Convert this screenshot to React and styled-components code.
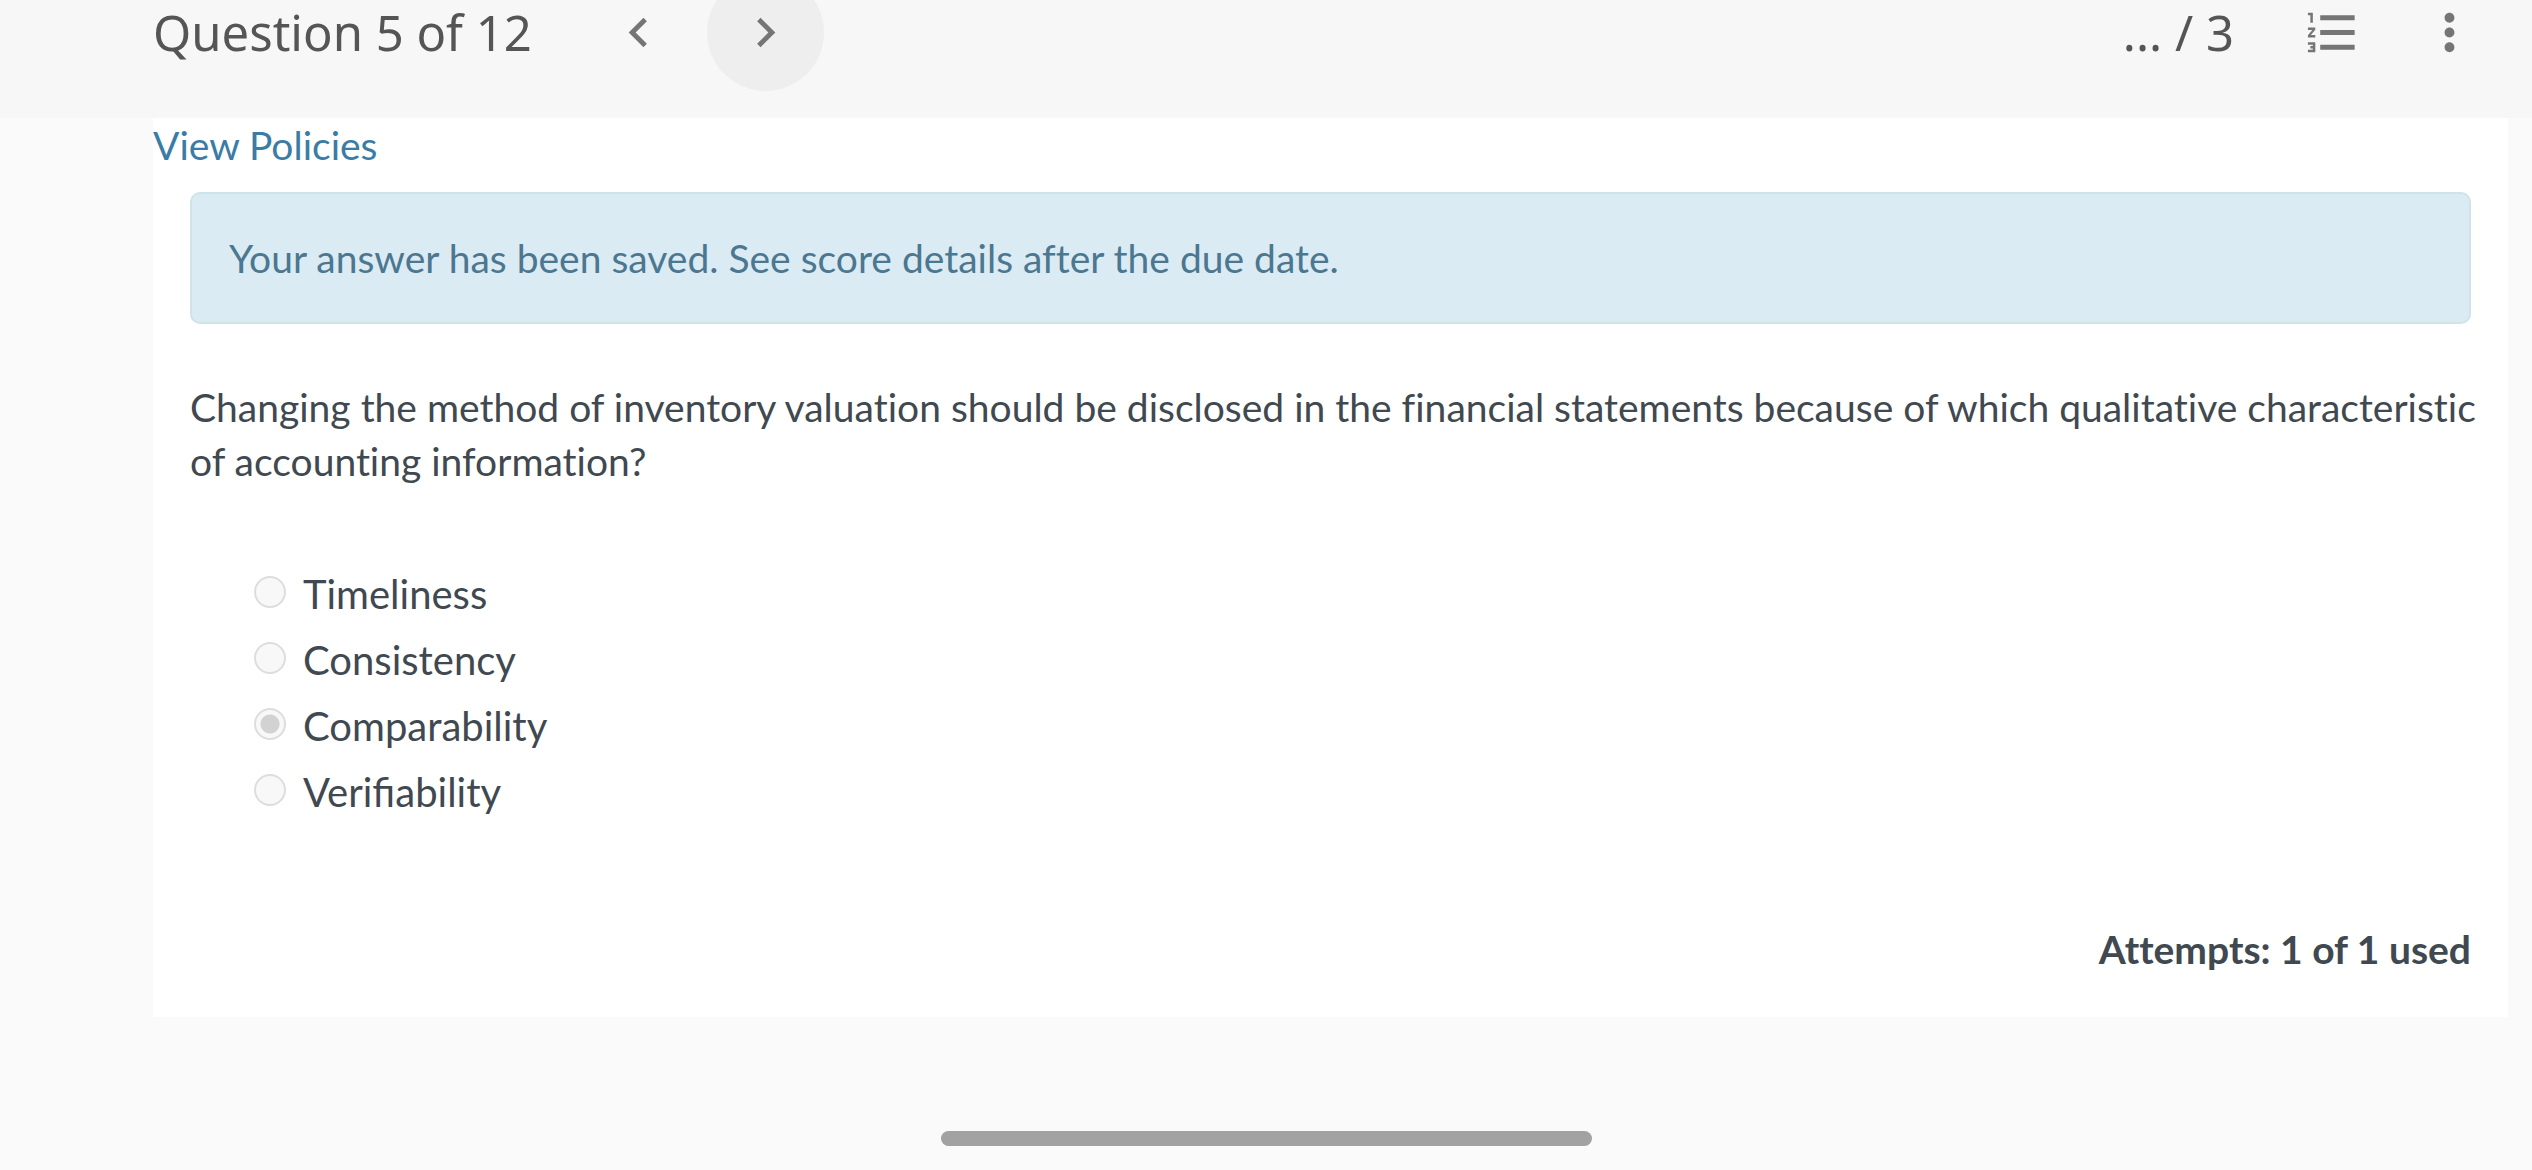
import React from "react";
import styled, { createGlobalStyle } from "styled-components";
import {
  MdChevronLeft,
  MdChevronRight,
  MdFormatListNumbered,
  MdMoreVert,
} from "react-icons/md";

const GlobalStyle = createGlobalStyle`
  *, *::before, *::after { box-sizing: border-box; }
  body {
    margin: 0;
    background: #fafafa;
    color: #404850;
    font-family: Lato, "Noto Sans", sans-serif;
    font-size: 39px;
    font-variant-ligatures: none;
    line-height: 54px;
  }
`;

const Page = styled.div`
  display: flex;
  flex-direction: column;
  min-height: 100vh;
  overflow: hidden;
`;

/* The bar is scrolled partly past the top edge of the screen. */
const TopBar = styled.header`
  display: flex;
  align-items: center;
  justify-content: space-between;
  height: 172px;
  margin-top: -54px;
  padding: 0 24px 0 153px;
  background: #f7f7f7;
  color: #555555;
  font-family: "Noto Sans", "Open Sans", sans-serif;
  font-size: 49px;
  line-height: 66px;
`;

const BarGroup = styled.div`
  display: flex;
  align-items: center;
`;

const Title = styled.h1`
  margin: 0 48px 0 0;
  font: inherit;
`;

const Pager = styled.nav`
  display: flex;
  gap: 10px;
`;

const Points = styled.span`
  margin-right: 40px;
`;

const IconButton = styled.button`
  display: flex;
  align-items: center;
  justify-content: center;
  width: 117px;
  height: 117px;
  padding: 0;
  border: 0;
  border-radius: 50%;
  background: ${(p) => (p.$active ? "#eeeeee" : "transparent")};
  color: #757575;
  font-size: 59px;
`;

const Card = styled.main`
  margin: 0 24px 0 153px;
  padding-bottom: 41px;
  background: #ffffff;
`;

const PolicyLink = styled.a`
  display: inline-block;
  color: #3a7ca5;
  text-decoration: none;
`;

const Body = styled.section`
  padding: 20px 37px 0;
`;

const Notice = styled.div`
  padding: 37px;
  border: 2px solid #cfe3ea;
  border-radius: 10px;
  background: #dbebf4;
  color: #4b7791;
`;

const Prompt = styled.p`
  margin: 56px -24px 0 0;
`;

const Options = styled.fieldset`
  display: flex;
  flex-direction: column;
  gap: 12px;
  margin: 79px 0 0;
  padding: 0 0 0 64px;
  border: 0;
  font-size: 40px;
  font-variant-ligatures: normal;
`;

const Option = styled.label`
  display: flex;
  gap: 17px;
`;

const Radio = styled.input`
  appearance: none;
  flex: none;
  width: 32px;
  height: 32px;
  margin: 9px 0 0;
  border: 2px solid #dddddd;
  border-radius: 50%;
  background: #f8f8f8;

  &:checked {
    background: radial-gradient(circle, #d2d2d2 0 9px, #f8f8f8 10px);
  }
`;

const Attempts = styled.p`
  margin: 103px 0 0;
  font-weight: 700;
  text-align: right;
`;

const HomeIndicator = styled.div`
  width: 651px;
  height: 15px;
  margin: auto auto 24px;
  border-radius: 8px;
  background: #a2a2a2;
`;

const choices = ["Timeliness", "Consistency", "Comparability", "Verifiability"];

export default function App() {
  return (
    <Page>
      <GlobalStyle />
      <TopBar>
        <BarGroup>
          <Title>Question 5 of 12</Title>
          <Pager>
            <IconButton type="button" aria-label="Previous question">
              <MdChevronLeft />
            </IconButton>
            <IconButton type="button" aria-label="Next question" $active>
              <MdChevronRight />
            </IconButton>
          </Pager>
        </BarGroup>
        <BarGroup>
          <Points>... / 3</Points>
          <IconButton type="button" aria-label="Question list">
            <MdFormatListNumbered />
          </IconButton>
          <IconButton type="button" aria-label="More options">
            <MdMoreVert />
          </IconButton>
        </BarGroup>
      </TopBar>
      <Card>
        <PolicyLink href="#policies">View Policies</PolicyLink>
        <Body>
          <Notice role="status">
            Your answer has been saved. See score details after the due date.
          </Notice>
          <Prompt id="prompt">
            Changing the method of inventory valuation should be disclosed in
            the financial statements because of which qualitative
            characteristic of accounting information?
          </Prompt>
          <Options aria-labelledby="prompt" disabled>
            {choices.map((choice) => (
              <Option key={choice}>
                <Radio
                  type="radio"
                  name="answer"
                  value={choice}
                  defaultChecked={choice === "Comparability"}
                />
                {choice}
              </Option>
            ))}
          </Options>
          <Attempts>Attempts: 1 of 1 used</Attempts>
        </Body>
      </Card>
      <HomeIndicator />
    </Page>
  );
}
